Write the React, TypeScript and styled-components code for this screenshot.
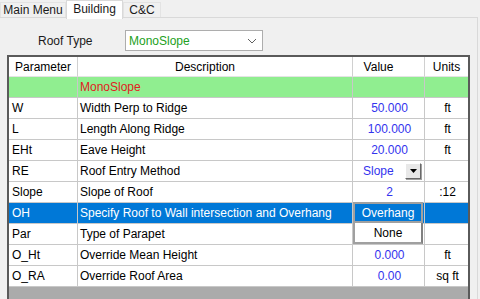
import { createGlobalStyle, styled } from "styled-components";

const GlobalStyle = createGlobalStyle`
  html, body {
    margin: 0;
    padding: 0;
    background: #f0f0f0;
  }
`;

interface RowData {
  param: string;
  desc: string;
  value: string;
  units: string;
  kind?: "title" | "select" | "combo" | "selected" | "list";
}

const rows: RowData[] = [
  { param: "", desc: "MonoSlope", value: "", units: "", kind: "title" },
  { param: "W", desc: "Width Perp to Ridge", value: "50.000", units: "ft" },
  { param: "L", desc: "Length Along Ridge", value: "100.000", units: "ft" },
  { param: "EHt", desc: "Eave Height", value: "20.000", units: "ft" },
  { param: "RE", desc: "Roof Entry Method", value: "Slope", units: "", kind: "combo" },
  { param: "Slope", desc: "Slope of Roof", value: "2", units: ":12" },
  { param: "OH", desc: "Specify Roof to Wall intersection and Overhang", value: "", units: "", kind: "selected" },
  { param: "Par", desc: "Type of Parapet", value: "", units: "", kind: "list" },
  { param: "O_Ht", desc: "Override Mean Height", value: "0.000", units: "ft" },
  { param: "O_RA", desc: "Override Roof Area", value: "0.00", units: "sq ft" },
];

export default function App() {
  return (
    <>
      <GlobalStyle />
      <Window>
        <TabStrip>
          <Tab $width={66}>Main Menu</Tab>
          <Tab $width={57} $active>Building</Tab>
          <Tab $width={38}>C&amp;C</Tab>
        </TabStrip>
        <Page>
          <RoofRow>
            <RoofLabel>Roof Type</RoofLabel>
            <Combo>
              MonoSlope
              <svg width="10" height="6" viewBox="0 0 10 6">
                <path d="M1 1 L5 5 L9 1" fill="none" stroke="#606060" strokeWidth="1" />
              </svg>
            </Combo>
          </RoofRow>

          <Grid>
            <HeadCell>Parameter</HeadCell>
            <HeadCell $padRight={20}>Description</HeadCell>
            <HeadCell $padRight={20}>Value</HeadCell>
            <HeadCell $last>Units</HeadCell>

            {rows.map((r, i) => {
              const bg =
                r.kind === "title" ? "#90ee90" : r.kind === "selected" ? "#0078d7" : "#ffffff";
              const fg = r.kind === "selected" ? "#ffffff" : "#000000";
              return (
                <Row key={i}>
                  <Cell $bg={bg} $color={fg} $pad={3}>{r.param}</Cell>
                  <Cell $bg={bg} $color={r.kind === "title" ? "#e02020" : fg} $pad={2}>
                    {r.desc}
                  </Cell>
                  <Cell $bg={bg} $color="#3333ee" $align="center">
                    {r.kind === "combo" ? (
                      <ComboValue>
                        <span>{r.value}</span>
                        <DropButton>
                          <svg width="7" height="4" viewBox="0 0 7 4">
                            <path d="M0 0 H7 L3.5 4 Z" fill="#000" />
                          </svg>
                        </DropButton>
                      </ComboValue>
                    ) : r.kind === "selected" ? (
                      <DropList>
                        <ListItem $active>Overhang</ListItem>
                        <ListItem>None</ListItem>
                      </DropList>
                    ) : (
                      r.value
                    )}
                  </Cell>
                  <Cell $bg={bg} $color={fg} $align="center" $last>
                    {r.units}
                  </Cell>
                </Row>
              );
            })}
          </Grid>
        </Page>
      </Window>
    </>
  );
}

const Window = styled.div`
  width: 480px;
  height: 299px;
  overflow: hidden;
  background: #f0f0f0;
  font-family: "Liberation Sans", Arial, sans-serif;
  font-size: 12px;
  color: #000;
`;

const TabStrip = styled.div`
  display: flex;
  height: 17px;
  position: relative;
  z-index: 1;
`;

const Tab = styled.div<{ $width: number; $active?: boolean }>`
  box-sizing: border-box;
  width: ${(p) => p.$width}px;
  height: ${(p) => (p.$active ? 19 : 15)}px;
  margin-top: ${(p) => (p.$active ? 0 : 2)}px;
  background: ${(p) => (p.$active ? "#ffffff" : "#f0f0f0")};
  border: 1px solid ${(p) => (p.$active ? "#d9d9d9" : "#e3e3e3")};
  border-bottom: none;
  display: flex;
  align-items: center;
  justify-content: center;
  padding-bottom: ${(p) => (p.$active ? 2 : 0)}px;
  color: #1a1a1a;
`;

const Page = styled.div`
  box-sizing: border-box;
  width: 478px;
  height: 282px;
  border-top: 1px solid #d9d9d9;
  border-right: 1px solid #d9d9d9;
`;

const RoofRow = styled.div`
  display: flex;
  align-items: center;
  height: 21px;
  margin-top: 12px;
`;

const RoofLabel = styled.div`
  width: 87px;
  margin-left: 38px;
  color: #1a1a1a;
`;

const Combo = styled.div`
  box-sizing: border-box;
  width: 138px;
  height: 21px;
  background: #fff;
  border: 1px solid #adadad;
  display: flex;
  align-items: center;
  justify-content: space-between;
  padding: 0 5px 0 3px;
  color: #22a022;
`;

const Grid = styled.div`
  box-sizing: border-box;
  width: 463px;
  height: 260px;
  margin: 4px 0 0 7px;
  border: 2px solid #5a5a5a;
  background: #ababab;
  display: grid;
  grid-template-columns: 69px 275px 72px 43px;
  grid-template-rows: 20px repeat(10, 21px);
  align-content: start;
`;

const Row = styled.div`
  display: contents;
`;

const HeadCell = styled.div<{ $padRight?: number; $last?: boolean }>`
  box-sizing: border-box;
  background: #fff;
  border-right: ${(p) => (p.$last ? "none" : "1px solid #d0d0d0")};
  border-bottom: 1px solid #e4e4e4;
  display: flex;
  align-items: center;
  justify-content: center;
  padding-right: ${(p) => p.$padRight ?? 0}px;
  color: #000;
`;

const Cell = styled.div<{
  $bg: string;
  $color: string;
  $align?: "center";
  $pad?: number;
  $last?: boolean;
}>`
  box-sizing: border-box;
  position: relative;
  background: ${(p) => p.$bg};
  color: ${(p) => p.$color};
  border-right: ${(p) => (p.$last ? "none" : "1px solid #c8c8c8")};
  border-bottom: 1px solid #c8c8c8;
  display: flex;
  align-items: center;
  justify-content: ${(p) => (p.$align === "center" ? "center" : "flex-start")};
  padding-left: ${(p) => p.$pad ?? 4}px;
  padding-right: ${(p) => (p.$align === "center" ? 2 : 0)}px;
  white-space: nowrap;
`;

const ComboValue = styled.div`
  display: flex;
  align-items: center;
  justify-content: space-between;
  width: 100%;
  padding: 0 1px 0 6px;
`;

const DropButton = styled.div`
  box-sizing: border-box;
  width: 16px;
  height: 16px;
  background: #e8e8e8;
  border: 1px solid;
  border-color: #ffffff #696969 #696969 #ffffff;
  box-shadow: 1px 1px 0 #a0a0a0;
  display: flex;
  align-items: center;
  justify-content: center;
`;

const DropList = styled.div`
  position: absolute;
  left: 0;
  top: -1px;
  width: 70px;
  z-index: 2;
`;

const ListItem = styled.div<{ $active?: boolean }>`
  box-sizing: border-box;
  height: 21px;
  display: flex;
  align-items: center;
  justify-content: center;
  background: ${(p) => (p.$active ? "#0078d7" : "#ffffff")};
  color: ${(p) => (p.$active ? "#ffffff" : "#000000")};
  border: 2px solid #a0a0a0;
  border-top-width: ${(p) => (p.$active ? 2 : 0)}px;
  border-right-color: ${(p) => (p.$active ? "#a0a0a0" : "#808080")};
`;
